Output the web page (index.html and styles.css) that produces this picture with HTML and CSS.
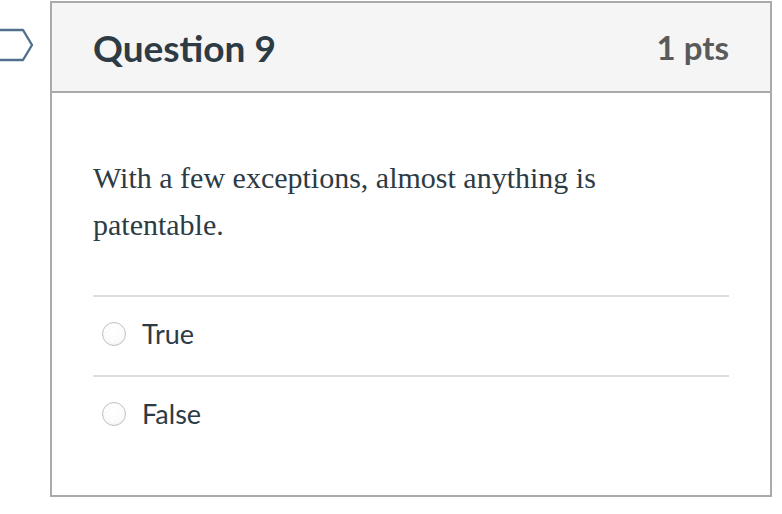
FILE: index.html
```html
<!DOCTYPE html>
<html lang="en">
<head>
<meta charset="utf-8">
<title>Question 9</title>
<link rel="stylesheet" href="styles.css">
</head>
<body>
<div class="page">
  <svg class="flag" width="40" height="36" viewBox="0 0 40 36" aria-hidden="true">
    <path d="M-6 2 H23 L32 17 L23 32 H-6" fill="#fff" stroke="#52708e" stroke-width="2.4" stroke-linejoin="round"/>
  </svg>
  <div class="question">
    <div class="q-header">
      <h2 class="q-title">Question 9</h2>
      <span class="q-points">1 pts</span>
    </div>
    <div class="q-body">
      <p class="q-text">With a few exceptions, almost anything is patentable.</p>
      <div class="answers">
        <label class="answer"><span class="radio"></span><span class="answer-label">True</span></label>
        <label class="answer"><span class="radio"></span><span class="answer-label">False</span></label>
      </div>
    </div>
  </div>
</div>
</body>
</html>
```
FILE: styles.css
```css
html, body {
  margin: 0;
  padding: 0;
  background: #fff;
}
.page {
  position: relative;
  padding: 1px 0 0 50px;
}
.flag {
  position: absolute;
  left: 0;
  top: 28px;
}
.question {
  width: 722px;
  box-sizing: border-box;
  border: 2px solid #aaaaaa;
  background: #fff;
}
.q-header {
  height: 88px;
  background: #f5f5f5;
  border-bottom: 2px solid #aaaaaa;
  display: flex;
  align-items: center;
  justify-content: space-between;
  padding: 0 41px;
  font-family: Lato, "Noto Sans", sans-serif;
  font-weight: 700;
}
.q-title {
  margin: 0;
  font-size: 37px;
  font-weight: 700;
  color: #2d3b45;
  line-height: 1;
}
.q-points {
  font-size: 33px;
  color: #5a5a5a;
  line-height: 1;
}
.q-body {
  padding: 61px 41px 40px;
}
.q-text {
  margin: 0 0 47px;
  max-width: 600px;
  font-family: "Liberation Serif", "Times New Roman", serif;
  font-size: 30px;
  line-height: 47px;
  color: #2d3b45;
}
.answers {
  display: flex;
  flex-direction: column;
}
.answer {
  display: flex;
  align-items: center;
  border-top: 2px solid #dedede;
  padding: 24px 0 28px 9px;
  font-family: Lato, "Noto Sans", sans-serif;
  font-size: 27px;
  line-height: 26px;
  color: #2d3b45;
}
.radio {
  width: 22px;
  height: 22px;
  border-radius: 50%;
  border: 1px solid #c0c0c0;
  background: radial-gradient(circle at 50% 40%, #ffffff 0%, #fbfbfb 60%, #e9e9e9 100%);
  margin-right: 16px;
  flex: none;
}
```
